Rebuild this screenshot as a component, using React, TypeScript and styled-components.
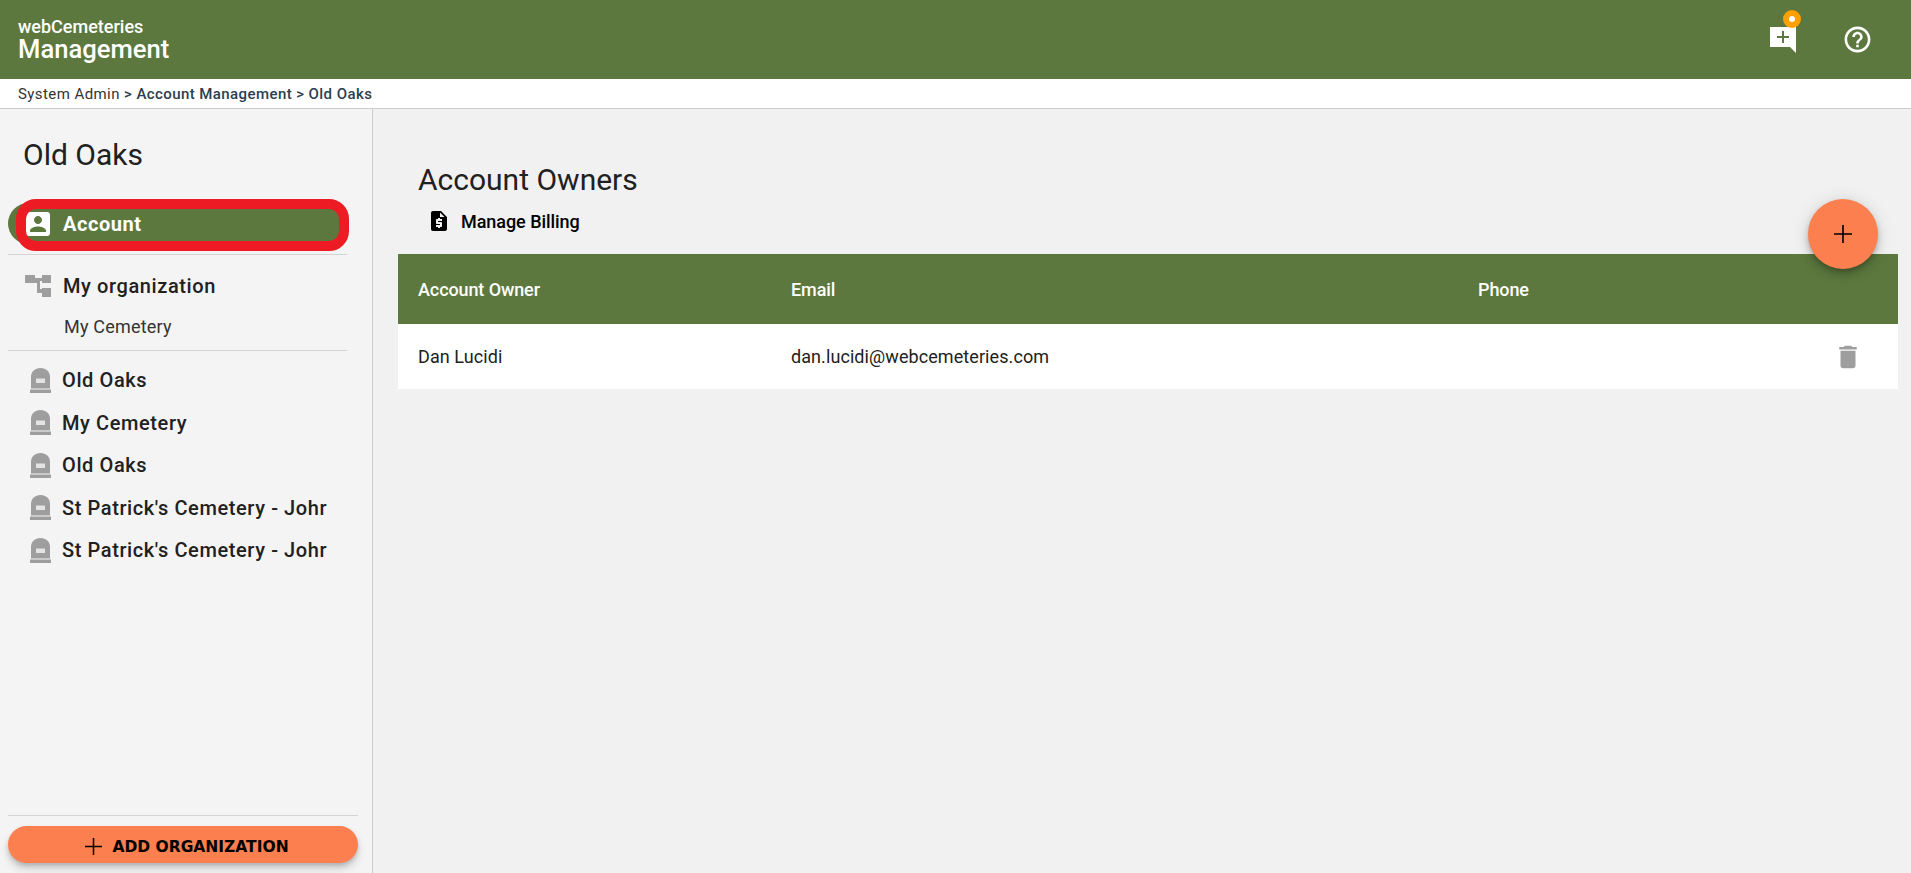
import React from 'react';
import styled, { createGlobalStyle } from 'styled-components';

const GREEN = '#5c783e';
const ORANGE = '#fb7f4f';
const GREY = '#9e9e9e';

const GlobalStyle = createGlobalStyle`
  html, body {
    margin: 0;
    height: 100%;
    overflow: hidden;
    font-family: Roboto, "Liberation Sans", sans-serif;
    color: #212121;
  }
  #root {
    height: 100%;
  }
`;

const Page = styled.div`
  height: 873px;
  display: flex;
  flex-direction: column;
`;

const Header = styled.header`
  height: 79px;
  flex: none;
  background: ${GREEN};
  color: #fff;
  display: flex;
  align-items: center;
  justify-content: space-between;
  padding: 0 38px 0 18px;
`;

const Brand = styled.div`
  display: flex;
  flex-direction: column;
  font-weight: 500;
`;

const BrandTop = styled.span`
  font-size: 18px;
  line-height: 18px;
`;

const BrandMain = styled.span`
  font-size: 25.6px;
  line-height: 26px;
`;

const HeaderIcons = styled.div`
  display: flex;
  align-items: center;
  gap: 46px;
`;

const CommentButton = styled.div`
  position: relative;
  width: 26px;
  height: 26px;
  margin-top: 1px;
`;

const Badge = styled.span`
  position: absolute;
  top: -17px;
  left: 13px;
  width: 18px;
  height: 18px;
  border-radius: 50%;
  background: #ffa000;
  display: flex;
  align-items: center;
  justify-content: center;

  &::after {
    content: '';
    width: 6px;
    height: 6px;
    border-radius: 50%;
    background: #fff;
  }
`;

const Crumbs = styled.nav`
  height: 30px;
  flex: none;
  box-sizing: border-box;
  background: #fff;
  border-bottom: 1px solid #ccc;
  padding-left: 18px;
  display: flex;
  align-items: center;
  font-size: 15px;
  letter-spacing: 0.42px;
  font-weight: 500;
  color: #2c3e50;

  span:first-child {
    color: #333;
    font-weight: 400;
  }
`;

const Body = styled.div`
  flex: 1;
  min-height: 0;
  display: flex;
`;

const Sidebar = styled.aside`
  width: 373px;
  flex: none;
  box-sizing: border-box;
  background: #f4f4f4;
  border-right: 1px solid #ccc;
  display: flex;
  flex-direction: column;
  padding: 0 15px 10px 8px;
`;

const SideTitle = styled.h2`
  margin: 0;
  padding: 28px 0 0 15px;
  height: 88px;
  box-sizing: border-box;
  font-size: 30px;
  line-height: 36px;
  font-weight: 400;
  color: #212121;
`;

const AccountRow = styled.div`
  position: relative;
  margin-top: 6px;
  margin-right: 14px;
  height: 41px;
  border-radius: 21px;
  background: ${GREEN};
  color: #fff;
  display: flex;
  align-items: center;
  padding-left: 18px;
  gap: 13px;
  font-size: 20px;
  font-weight: 700;
  letter-spacing: 0.55px;
`;

const Highlight = styled.span`
  position: absolute;
  top: -4px;
  left: 8px;
  right: -6px;
  height: 52px;
  box-sizing: border-box;
  border: 10px solid #ed1c24;
  border-radius: 20px;
  pointer-events: none;
`;

const Rule = styled.hr<{ $wide?: boolean }>`
  border: 0;
  border-top: 1px solid #d4d4d4;
  margin: 0;
  margin-right: ${({ $wide }) => ($wide ? '0' : '10px')};
`;

const AccountRule = styled(Rule)`
  margin-top: 10px;
`;

const OrgRow = styled.div`
  display: flex;
  align-items: center;
  gap: 12px;
  height: 30px;
  padding-left: 17px;
  margin-top: 16px;
  font-size: 20px;
  font-weight: 500;
  letter-spacing: 0.6px;
`;

const OrgChild = styled.div`
  padding-left: 56px;
  font-size: 18px;
  letter-spacing: 0.2px;
  line-height: 20px;
  margin: 16px 0 13px;
  color: #333;
`;

const CemeteryList = styled.ul`
  list-style: none;
  margin: 8px 0 0;
  padding: 0;
`;

const CemeteryItem = styled.li`
  height: 42.5px;
  display: flex;
  align-items: center;
  gap: 11px;
  padding-left: 22px;
  font-size: 20px;
  font-weight: 500;
  letter-spacing: 0.6px;
  white-space: nowrap;
`;

const SideFooter = styled.div`
  margin-top: auto;
  margin-right: -1px;
  display: flex;
  flex-direction: column;
  gap: 10px;
`;

const AddButton = styled.button`
  height: 37px;
  border: 0;
  border-radius: 19px;
  background: ${ORANGE};
  color: #000;
  box-shadow: 0 3px 5px -1px rgba(0, 0, 0, 0.2), 0 6px 10px rgba(0, 0, 0, 0.14);
  display: flex;
  align-items: center;
  justify-content: center;
  gap: 10px;
  padding: 4px 0 0 8px;
  font-family: "DejaVu Sans", sans-serif;
  font-size: 15.5px;
  font-weight: 700;
`;

const Main = styled.main`
  flex: 1;
  min-width: 0;
  background: #f1f1f1;
  padding: 53px 13px 0 25px;
`;

const MainHead = styled.div`
  position: relative;
  padding: 0 0 0 20px;
  height: 92px;
`;

const MainTitle = styled.h1`
  margin: 0;
  font-size: 30px;
  line-height: 36px;
  font-weight: 400;
  color: #212121;
`;

const BillingLink = styled.a`
  display: flex;
  align-items: center;
  gap: 10px;
  margin: 11px 0 0 9px;
  font-size: 18px;
  letter-spacing: -0.05px;
  font-weight: 500;
  color: #000;
`;

const Fab = styled.button`
  position: absolute;
  top: 37px;
  right: 20px;
  z-index: 1;
  width: 70px;
  height: 70px;
  border: 0;
  border-radius: 50%;
  background: ${ORANGE};
  box-shadow: 0 3px 5px -1px rgba(0, 0, 0, 0.2), 0 6px 10px rgba(0, 0, 0, 0.14),
    0 1px 18px rgba(0, 0, 0, 0.12);
  display: flex;
  align-items: center;
  justify-content: center;
  padding: 0;
`;

const Row = styled.div<{ $head?: boolean }>`
  display: grid;
  grid-template-columns: 373px 687px 1fr 65px;
  align-items: center;
  padding-left: 20px;
  height: ${({ $head }) => ($head ? '70px' : '65px')};
  background: ${({ $head }) => ($head ? GREEN : '#fff')};
  color: ${({ $head }) => ($head ? '#fff' : '#212121')};
  font-size: 18px;
  letter-spacing: ${({ $head }) => ($head ? '-0.1px' : '0.08px')};
  font-weight: ${({ $head }) => ($head ? 500 : 400)};
`;

const Icon = styled.svg<{ $size: number; $height?: number; $color?: string }>`
  width: ${({ $size }) => $size}px;
  height: ${({ $size, $height }) => $height ?? $size}px;
  fill: ${({ $color }) => $color || 'currentColor'};
  flex: none;
  display: block;
`;

const PlusIcon = ({ size }: { size: number }) => (
  <Icon $size={size} viewBox="0 0 18 18" $color="#000">
    <path d="M8.2 0h1.6v8.2H18v1.6H9.8V18H8.2V9.8H0V8.2h8.2z" />
  </Icon>
);

const Tombstone = () => (
  <Icon $size={21} $height={25} viewBox="0 0 21 25" $color={GREY}>
    <path d="M1 20.5V9C1 3.5 5 0 10.5 0S20 3.5 20 9v11.5z" />
    <path d="M6 10.5h9v4.5H6z" fill="#e4e4e4" />
    <path d="M0 21.5h21V25H0z" />
  </Icon>
);

const OrgIcon = () => (
  <Icon $size={26} $height={22} viewBox="0 0 26 22" $color={GREY}>
    <path d="M0 0h10v3h7V0h9v8h-9V6h-2v8h2v-1h9v9h-9v-4h-5V8h-2v0H0z" />
  </Icon>
);

const cemeteries = [
  'Old Oaks',
  'My Cemetery',
  'Old Oaks',
  "St Patrick's Cemetery - Johr",
  "St Patrick's Cemetery - Johr",
];

export default function App() {
  return (
    <Page>
      <GlobalStyle />
      <Header>
        <Brand>
          <BrandTop>webCemeteries</BrandTop>
          <BrandMain>Management</BrandMain>
        </Brand>
        <HeaderIcons>
          <CommentButton>
            <Icon $size={26} viewBox="0 0 26 26" $color="#fff">
              <path d="M0 0h26v26l-6-6H0zM12 4v5H7v2h5v5h2v-5h5V9h-5V4z" fillRule="evenodd" />
            </Icon>
            <Badge />
          </CommentButton>
          <Icon $size={31} viewBox="0 0 24 24" $color="#fff">
            <path d="M11 18h2v-2h-2v2zm1-16C6.48 2 2 6.48 2 12s4.48 10 10 10 10-4.48 10-10S17.52 2 12 2zm0 18c-4.41 0-8-3.59-8-8s3.59-8 8-8 8 3.59 8 8-3.59 8-8 8zm0-14c-2.21 0-4 1.79-4 4h2c0-1.1.9-2 2-2s2 .9 2 2c0 2-3 1.75-3 5h2c0-2.25 3-2.5 3-5 0-2.21-1.79-4-4-4z" />
          </Icon>
        </HeaderIcons>
      </Header>
      <Crumbs>
        <span>System Admin</span>&nbsp;&gt;&nbsp;<span>Account Management</span>&nbsp;&gt;&nbsp;<span>Old Oaks</span>
      </Crumbs>
      <Body>
        <Sidebar>
          <SideTitle>Old Oaks</SideTitle>
          <AccountRow>
            <Icon $size={24} viewBox="3 3 18 18" $color="#fff">
              <path d="M3 5v14c0 1.1.89 2 2 2h14c1.1 0 2-.9 2-2V5c0-1.1-.9-2-2-2H5c-1.11 0-2 .9-2 2zm12 4c0 1.66-1.34 3-3 3s-3-1.34-3-3 1.34-3 3-3 3 1.34 3 3zm-9 8c0-2 4-3.1 6-3.1s6 1.1 6 3.1v1H6v-1z" />
            </Icon>
            Account
            <Highlight />
          </AccountRow>
          <AccountRule />
          <OrgRow>
            <OrgIcon />
            My organization
          </OrgRow>
          <OrgChild>My Cemetery</OrgChild>
          <Rule />
          <CemeteryList>
            {cemeteries.map((name, i) => (
              <CemeteryItem key={i}>
                <Tombstone />
                {name}
              </CemeteryItem>
            ))}
          </CemeteryList>
          <SideFooter>
            <Rule $wide />
            <AddButton>
              <PlusIcon size={17} />
              ADD ORGANIZATION
            </AddButton>
          </SideFooter>
        </Sidebar>
        <Main>
          <MainHead>
            <MainTitle>Account Owners</MainTitle>
            <BillingLink>
              <Icon $size={24} viewBox="0 0 24 24">
                <path d="M14 2H6c-1.1 0-1.99.9-1.99 2L4 20c0 1.1.89 2 1.99 2H18c1.1 0 2-.9 2-2V8l-6-6zm1 10h-4v1h3c.55 0 1 .45 1 1v3c0 .55-.45 1-1 1h-1v1h-2v-1H9v-2h4v-1h-3c-.55 0-1-.45-1-1v-3c0-.55.45-1 1-1h1V9h2v1h2v2zm-2-4V3.5L17.5 8H13z" />
              </Icon>
              Manage Billing
            </BillingLink>
            <Fab>
              <PlusIcon size={18} />
            </Fab>
          </MainHead>
          <Row $head>
            <span>Account Owner</span>
            <span>Email</span>
            <span>Phone</span>
          </Row>
          <Row>
            <span>Dan Lucidi</span>
            <span>dan.lucidi@webcemeteries.com</span>
            <span />
            <Icon $size={30} viewBox="0 0 24 24" $color={GREY}>
              <path d="M6 19c0 1.1.9 2 2 2h8c1.1 0 2-.9 2-2V7H6v12zM19 4h-3.5l-1-1h-5l-1 1H5v2h14V4z" />
            </Icon>
          </Row>
        </Main>
      </Body>
    </Page>
  );
}
